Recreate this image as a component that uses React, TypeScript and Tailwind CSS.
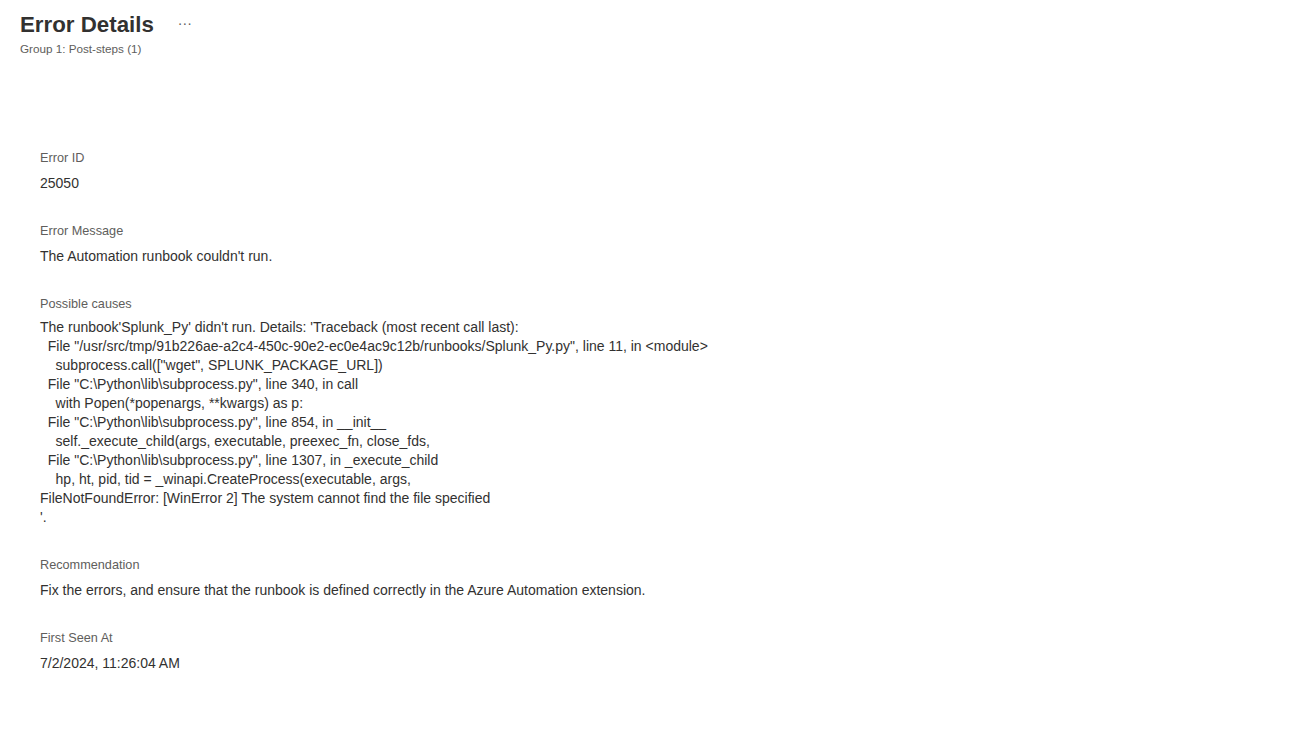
import React from "react";

const trace = `The runbook'Splunk_Py' didn't run. Details: 'Traceback (most recent call last):
  File "/usr/src/tmp/91b226ae-a2c4-450c-90e2-ec0e4ac9c12b/runbooks/Splunk_Py.py", line 11, in <module>
    subprocess.call(["wget", SPLUNK_PACKAGE_URL])
  File "C:\\Python\\lib\\subprocess.py", line 340, in call
    with Popen(*popenargs, **kwargs) as p:
  File "C:\\Python\\lib\\subprocess.py", line 854, in __init__
    self._execute_child(args, executable, preexec_fn, close_fds,
  File "C:\\Python\\lib\\subprocess.py", line 1307, in _execute_child
    hp, ht, pid, tid = _winapi.CreateProcess(executable, args,
FileNotFoundError: [WinError 2] The system cannot find the file specified
'.`;

function Field({ label, children, pre }: { label: string; children: React.ReactNode; pre?: boolean }) {
  return (
    <div className="flex flex-col">
      <div className="text-[12.7px] leading-[16px] text-[#605e5c]">{label}</div>
      <div
        className={
          pre
            ? "mt-[6px] text-[14px] leading-[19px] text-[#323130] whitespace-pre-wrap"
            : "mt-[8px] text-[14px] leading-[19px] text-[#323130]"
        }
      >
        {children}
      </div>
    </div>
  );
}

export default function App() {
  return (
    <div
      className="min-h-[748px] w-full bg-white"
      style={{ fontFamily: '"Liberation Sans", Arial, sans-serif' }}
    >
      <div className="px-[20px] pt-[10px]">
        <div className="flex items-center gap-[24px]">
          <h1 className="text-[22.3px] leading-[30px] font-semibold text-[#323130]">Error Details</h1>
          <span className="text-[14px] leading-[20px] text-[#605e5c] -mt-[4px]">···</span>
        </div>
        <div className="mt-[1px] text-[11.7px] leading-[16px] text-[#605e5c]">Group 1: Post-steps (1)</div>
      </div>
      <div className="flex flex-col gap-[30px] px-[40px] pt-[93px]">
        <Field label="Error ID">25050</Field>
        <Field label="Error Message">The Automation runbook couldn't run.</Field>
        <Field label="Possible causes" pre>
          {trace}
        </Field>
        <Field label="Recommendation">
          Fix the errors, and ensure that the runbook is defined correctly in the Azure Automation extension.
        </Field>
        <Field label="First Seen At">7/2/2024, 11:26:04 AM</Field>
      </div>
    </div>
  );
}
